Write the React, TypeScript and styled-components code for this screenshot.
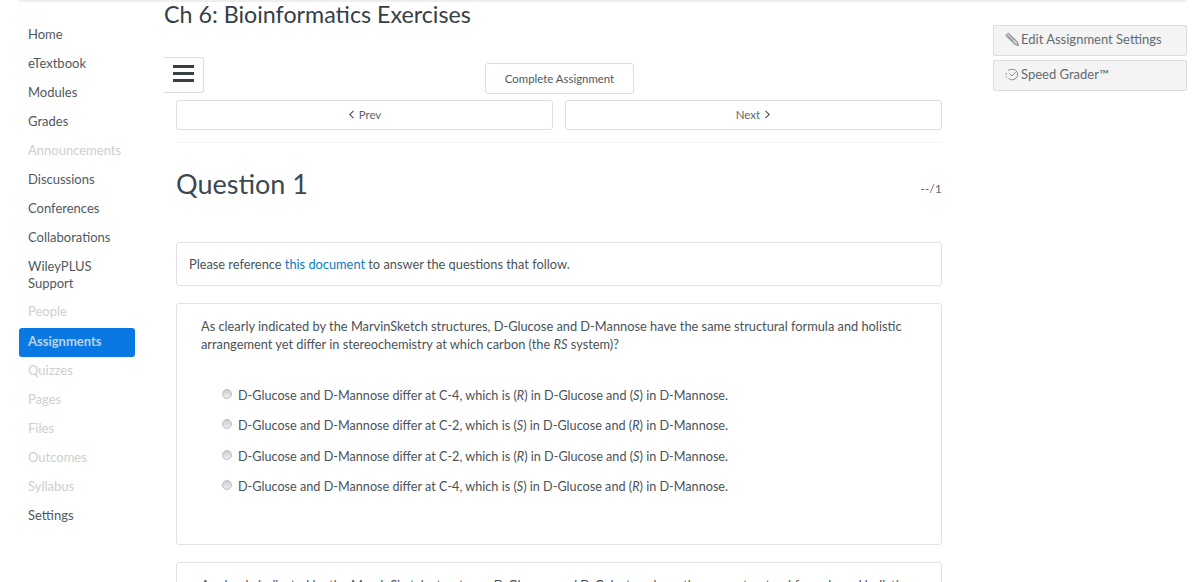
import React from 'react';
import styled, { createGlobalStyle } from 'styled-components';

const GlobalStyle = createGlobalStyle`
  html, body {
    margin: 0;
    padding: 0;
    height: 582px;
    overflow: hidden;
    background: #fff;
    font-family: Lato, "Open Sans", sans-serif;
    color: #2d3b45;
  }
  * { box-sizing: border-box; }
`;

type NavItem = { label: string; muted?: boolean; active?: boolean; wrapped?: boolean };

const navItems: NavItem[] = [
  { label: 'Home' },
  { label: 'eTextbook' },
  { label: 'Modules' },
  { label: 'Grades' },
  { label: 'Announcements', muted: true },
  { label: 'Discussions' },
  { label: 'Conferences' },
  { label: 'Collaborations' },
  { label: 'WileyPLUS Support', wrapped: true },
  { label: 'People', muted: true },
  { label: 'Assignments', active: true },
  { label: 'Quizzes', muted: true },
  { label: 'Pages', muted: true },
  { label: 'Files', muted: true },
  { label: 'Outcomes', muted: true },
  { label: 'Syllabus', muted: true },
  { label: 'Settings' },
];

const answers = [
  ['4', 'R', 'S'],
  ['2', 'S', 'R'],
  ['2', 'R', 'S'],
  ['4', 'S', 'R'],
];

const Page = styled.div`
  width: 1200px;
  height: 582px;
  overflow: hidden;
  padding: 0 13px 0 19px;
`;

const TopRule = styled.div`
  height: 2px;
  background: #eeeeee;
`;

const Columns = styled.div`
  display: flex;
  align-items: flex-start;
`;

const Sidebar = styled.nav`
  width: 116px;
  margin-right: 29px;
  padding-top: 18px;
  display: flex;
  flex-direction: column;
`;

const NavLink = styled.a<{ $muted?: boolean; $active?: boolean; $wrapped?: boolean }>`
  display: block;
  padding: ${p => (p.$active ? '5px 9px 7px' : '6px 9px 5px')};
  margin: ${p => (p.$active ? '2px 0 -1px' : p.$wrapped ? '0 40px 0 0' : '0 0 1px')};
  border-radius: 3px;
  font-size: 13px;
  line-height: 17px;
  font-weight: ${p => (p.$active ? 700 : 400)};
  color: ${p => (p.$active ? '#b9d3ec' : p.$muted ? '#cdcfd1' : '#50585e')};
  background: ${p => (p.$active ? '#0a78e2' : 'transparent')};
`;

const Main = styled.main`
  width: 778px;
  flex: none;
`;

const Title = styled.h1`
  margin: 0;
  height: 55px;
  font-size: 23.25px;
  line-height: 25px;
  font-weight: 400;
  color: #363f46;
`;

const ToolRow = styled.div`
  display: flex;
  align-items: flex-start;
  height: 43px;
`;

const MenuButton = styled.button`
  width: 40px;
  height: 36px;
  padding: 0 0 4px;
  border: 1px solid #dedede;
  border-left: 0;
  border-radius: 0 3px 3px 0;
  background: #fff;
  display: flex;
  align-items: center;
  justify-content: center;
`;

const CompleteButton = styled.button`
  width: 149px;
  height: 31px;
  margin: 6px 0 0 281px;
  padding: 0;
  border: 1px solid #dedede;
  border-radius: 3px;
  background: #fff;
  font: 400 11.4px Lato, sans-serif;
  color: #50585e;
`;

const Content = styled.div`
  padding-left: 12px;
  width: 778px;
`;

const Pager = styled.div`
  display: grid;
  grid-template-columns: 377px 377px;
  column-gap: 12px;
  height: 43px;
  border-bottom: 1px solid #f3f3f3;
`;

const PagerButton = styled.button`
  height: 30px;
  padding: 0 0 1px;
  border: 1px solid #dedede;
  border-radius: 3px;
  background: #fff;
  font: 400 11.5px Lato, sans-serif;
  color: #5f666b;
  display: flex;
  align-items: center;
  justify-content: center;
  gap: 4px;
`;

const QuestionHead = styled.div`
  display: flex;
  justify-content: space-between;
  height: 99px;
  padding-top: 23px;
`;

const QuestionTitle = styled.h2`
  margin: 0;
  font-size: 27px;
  line-height: 36px;
  font-weight: 400;
  color: #3b4850;
`;

const Points = styled.span`
  margin-top: 14px;
  font-size: 12.3px;
  line-height: 18px;
  color: #646b70;
`;

const Card = styled.section<{ $height: number }>`
  height: ${p => p.$height}px;
  margin-bottom: 17px;
  border: 1px solid #e2e2e2;
  border-radius: 3px;
  background: #fff;
`;

const NoticeText = styled.p`
  margin: 0;
  padding: 13px 12px;
  font-size: 12.8px;
  line-height: 17px;
  color: #4a5258;
`;

const DocLink = styled.a`
  color: #0a7cc4;
`;

const QuestionBody = styled.div`
  padding: 14px 24px 0;
`;

const Prompt = styled.p`
  margin: 0;
  font-size: 12.8px;
  line-height: 17.5px;
  color: #4a5258;
`;

const Options = styled.div`
  margin-top: 34px;
  display: flex;
  flex-direction: column;
  gap: 13px;
`;

const Option = styled.label`
  display: flex;
  align-items: center;
  height: 17.3px;
  padding-left: 21px;
  font-size: 12.65px;
  line-height: 17px;
  color: #4a5258;
`;

const Radio = styled.span`
  width: 10px;
  height: 10px;
  margin: -3px 6px 0 0;
  flex: none;
  border-radius: 50%;
  border: 1px solid #bcbcbc;
  background: linear-gradient(#cdcdcd, #eeeeee);
`;

const Aside = styled.aside`
  width: 194px;
  margin-left: 51px;
  padding-top: 23px;
  display: flex;
  flex-direction: column;
  gap: 4px;
`;

const SideButton = styled.button`
  height: 31px;
  padding: 0 0 3px 11px;
  border: 1px solid #dcdcdc;
  border-radius: 2px;
  background: #f4f4f4;
  display: flex;
  align-items: center;
  gap: 2px;
  font: 400 13px Lato, sans-serif;
  color: #646b70;
`;

const Chevron = ({ right }: { right?: boolean }) => (
  <svg width="7" height="9" viewBox="0 0 7 9" fill="none" stroke="#4a5258" strokeWidth="1.1">
    <path d={right ? 'M1.5 .8 5.2 4.5 1.5 8.2' : 'M5.5 .8 1.8 4.5 5.5 8.2'} />
  </svg>
);

const PencilIcon = () => (
  <svg width="14" height="14" viewBox="0 0 14 14" fill="#c9cbcd" stroke="#7f8589" strokeWidth="1">
    <path d="M.8 3.600 3.300 1.100l9.200 8.900 1 3.500-3.500-1z" />
    <path d="M2.700 4.100 8 9.400M4.700 2.900 10 8.200" fill="none" />
  </svg>
);

const GraderIcon = () => (
  <svg width="14" height="14" viewBox="0 0 14 14" fill="none" stroke="#888d91" strokeWidth="1">
    <path d="M1.800 10.500A5.500 5.500 0 0 1 1.800 5" strokeDasharray="1.500 1.200" />
    <path d="M3.200 3.200Q7 1 10.800 3.200L12.300 5.500A5.500 5.500 0 0 1 3.500 11.500" />
    <path d="m4.500 6.500 2.300 2.500 3.800-4" />
  </svg>
);

const App = () => (
  <Page>
    <GlobalStyle />
    <TopRule />
    <Columns>
      <Sidebar>
        {navItems.map(item => (
          <NavLink key={item.label} $muted={item.muted} $active={item.active} $wrapped={item.wrapped}>
            {item.label}
          </NavLink>
        ))}
      </Sidebar>
      <Main>
        <Title>Ch 6: Bioinformatics Exercises</Title>
        <ToolRow>
          <MenuButton aria-label="Menu">
            <svg width="21" height="17" viewBox="0 0 21 17" fill="#3a3f44">
              <rect width="21" height="3" />
              <rect y="7" width="21" height="3" />
              <rect y="14" width="21" height="3" />
            </svg>
          </MenuButton>
          <CompleteButton>Complete Assignment</CompleteButton>
        </ToolRow>
        <Content>
          <Pager>
            <PagerButton>
              <Chevron /> Prev
            </PagerButton>
            <PagerButton>
              Next <Chevron right />
            </PagerButton>
          </Pager>
          <QuestionHead>
            <QuestionTitle>Question 1</QuestionTitle>
            <Points>--/1</Points>
          </QuestionHead>
          <Card $height={44}>
            <NoticeText>
              Please reference <DocLink>this document</DocLink> to answer the questions that follow.
            </NoticeText>
          </Card>
          <Card $height={242}>
            <QuestionBody>
              <Prompt>
                As clearly indicated by the MarvinSketch structures, D-Glucose and D-Mannose have the same structural formula and holistic arrangement yet differ in stereochemistry at which carbon (the <i>RS</i> system)?
              </Prompt>
              <Options>
                {answers.map(([carbon, first, second], i) => (
                  <Option key={i}>
                    <Radio />
                    <span>
                      D-Glucose and D-Mannose differ at C-{carbon}, which is (<i>{first}</i>) in D-Glucose and (<i>{second}</i>) in D-Mannose.
                    </span>
                  </Option>
                ))}
              </Options>
            </QuestionBody>
          </Card>
          <Card $height={120}>
            <QuestionBody>
              <Prompt>
                As clearly indicated by the MarvinSketch structures, D-Glucose and D-Galactose have the same structural formula and holistic
              </Prompt>
            </QuestionBody>
          </Card>
        </Content>
      </Main>
      <Aside>
        <SideButton>
          <PencilIcon /> Edit Assignment Settings
        </SideButton>
        <SideButton>
          <GraderIcon /> Speed Grader™
        </SideButton>
      </Aside>
    </Columns>
  </Page>
);

export default App;
